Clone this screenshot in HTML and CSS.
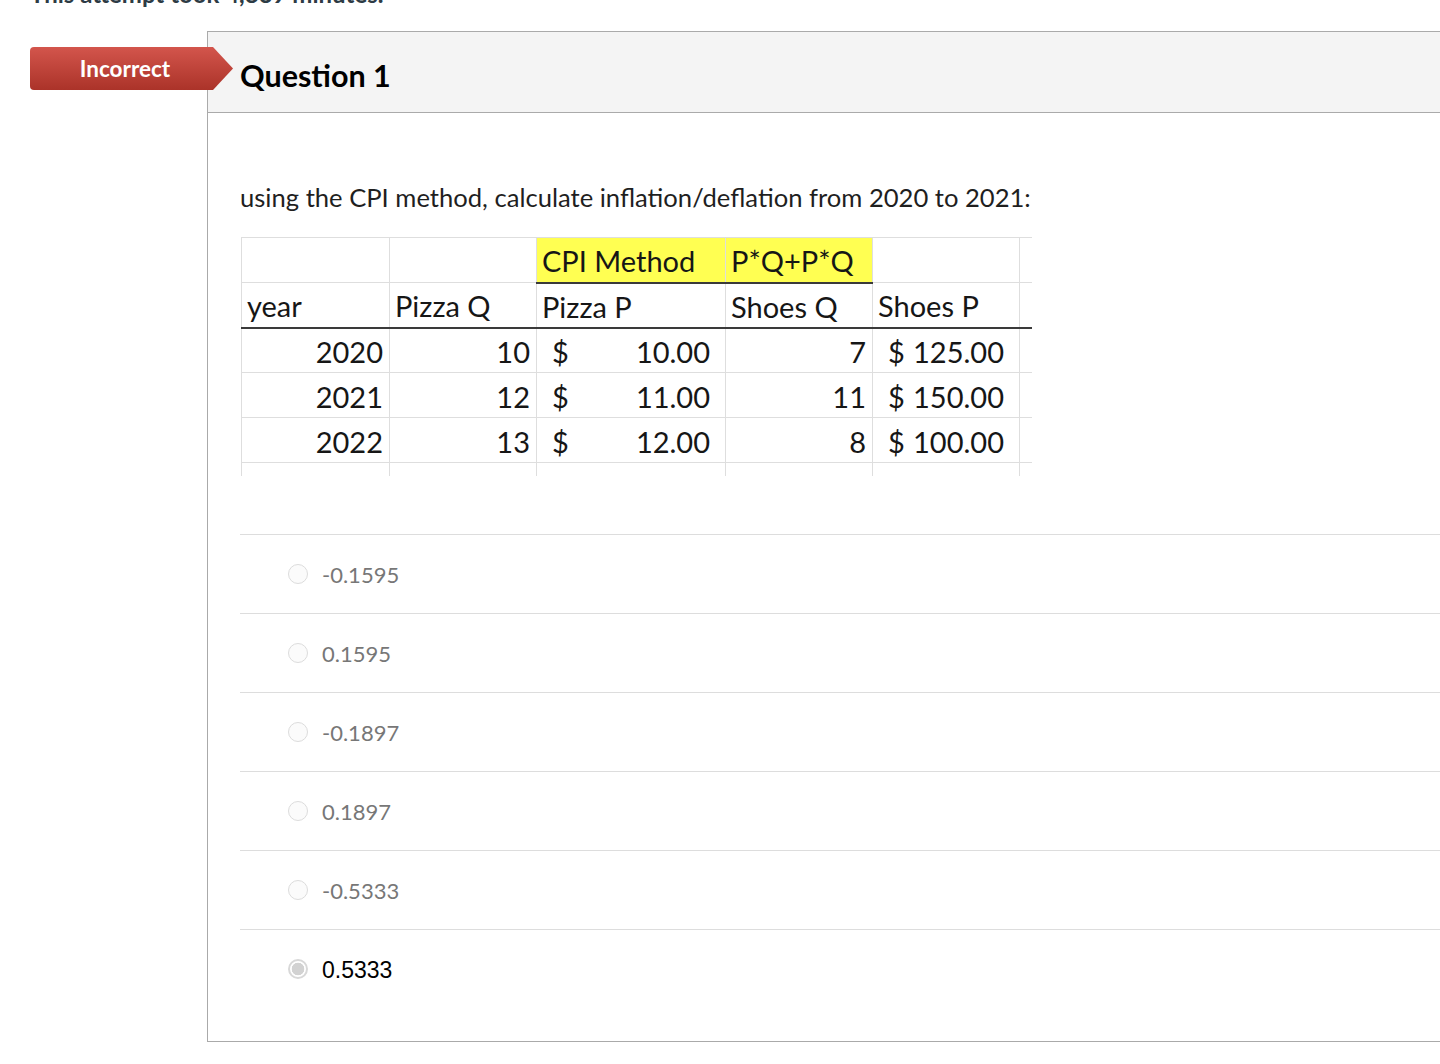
FILE: index.html
```html
<!DOCTYPE html>
<html lang="en">
<head>
<meta charset="utf-8">
<title>Question 1</title>
<link rel="stylesheet" href="styles.css">
</head>
<body>
<div class="page">
  <div class="attempt">This attempt took 4,839 minutes.</div>

  <div class="question">
    <div class="flag">Incorrect</div>
    <div class="q-header">Question 1</div>
    <div class="q-content">
      <p class="q-text">using the CPI method, calculate inflation/deflation from 2020 to 2021:</p>

      <table class="sheet">
        <colgroup>
          <col class="c1"><col class="c2"><col class="c3"><col class="c4"><col class="c5"><col class="c6">
        </colgroup>
        <tr class="r-top">
          <td></td><td></td>
          <td class="hl">CPI Method</td>
          <td class="hl">P*Q+P*Q</td>
          <td></td><td class="last"></td>
        </tr>
        <tr class="r-head">
          <td>year</td><td>Pizza Q</td><td>Pizza P</td><td>Shoes Q</td><td>Shoes P</td><td class="last"></td>
        </tr>
        <tr>
          <td class="num">2020</td><td class="num">10</td>
          <td><div class="acct"><span>$</span><span>10.00</span></div></td>
          <td class="num">7</td>
          <td><div class="acct tight"><span>$</span><span>125.00</span></div></td>
          <td class="last"></td>
        </tr>
        <tr>
          <td class="num">2021</td><td class="num">12</td>
          <td><div class="acct"><span>$</span><span>11.00</span></div></td>
          <td class="num">11</td>
          <td><div class="acct tight"><span>$</span><span>150.00</span></div></td>
          <td class="last"></td>
        </tr>
        <tr>
          <td class="num">2022</td><td class="num">13</td>
          <td><div class="acct"><span>$</span><span>12.00</span></div></td>
          <td class="num">8</td>
          <td><div class="acct tight"><span>$</span><span>100.00</span></div></td>
          <td class="last"></td>
        </tr>
        <tr class="r-stub">
          <td></td><td></td><td></td><td></td><td></td><td class="last"></td>
        </tr>
      </table>

      <div class="answers">
        <div class="answer"><span class="radio"></span><span class="a-text">-0.1595</span></div>
        <div class="answer"><span class="radio"></span><span class="a-text">0.1595</span></div>
        <div class="answer"><span class="radio"></span><span class="a-text">-0.1897</span></div>
        <div class="answer"><span class="radio"></span><span class="a-text">0.1897</span></div>
        <div class="answer"><span class="radio"></span><span class="a-text">-0.5333</span></div>
        <div class="answer selected"><span class="radio checked"></span><span class="a-text">0.5333</span></div>
      </div>
    </div>
  </div>
</div>
</body>
</html>
```

FILE: styles.css
```css
* { box-sizing: border-box; }

html, body {
  margin: 0;
  padding: 0;
  background: #ffffff;
  overflow: hidden;
}

body {
  font-family: Lato, "Liberation Sans", sans-serif;
  color: #1c1c1c;
}

.page {
  width: 1440px;
  height: 1064px;
  overflow: hidden;
}

.attempt {
  margin-top: -18px;
  padding-left: 30px;
  font-size: 24px;
  line-height: 24px;
  height: 24px;
  color: #2d3b45;
  font-weight: 700;
}

.question {
  position: relative;
  margin-top: 25px;
  margin-left: 207px;
  margin-right: -10px;
  border-top: 1px solid #aaaaaa;
  border-left: 1px solid #aaaaaa;
  border-bottom: 1px solid #aaaaaa;
}

.flag {
  position: absolute;
  left: -178px;
  top: 15px;
  width: 203px;
  height: 43px;
  padding-right: 13px;
  display: flex;
  align-items: center;
  justify-content: center;
  font-size: 22.5px;
  font-weight: 700;
  color: #ffffff;
  border-radius: 4px 0 0 4px;
  background: linear-gradient(#d3554c, #ab3329);
  clip-path: polygon(0 0, calc(100% - 20px) 0, 100% 50%, calc(100% - 20px) 100%, 0 100%);
}

.q-header {
  height: 81px;
  padding: 5px 32px 0;
  display: flex;
  align-items: center;
  background: #f4f4f4;
  border-bottom: 1px solid #aaaaaa;
  font-size: 30.5px;
  font-weight: 700;
  color: #000000;
}

.q-content {
  padding: 66px 0 33px 32px;
}

.q-text {
  margin: 0;
  font-size: 25.6px;
  line-height: 36px;
  color: #1f1f1f;
}

.sheet {
  margin: 22px 0 0 1px;
  border-collapse: collapse;
  table-layout: fixed;
  width: 790px;
  font-family: Lato, "Liberation Sans", sans-serif;
  font-size: 29px;
  color: #161616;
}

.sheet col.c1 { width: 148px; }
.sheet col.c2 { width: 147px; }
.sheet col.c3 { width: 189px; }
.sheet col.c4 { width: 147px; }
.sheet col.c5 { width: 147px; }
.sheet col.c6 { width: 12px; }

.sheet td {
  border: 1px solid #dedede;
  padding: 3px 6px 0 5px;
  height: 45px;
  white-space: nowrap;
  overflow: visible;
  line-height: 40px;
}

.sheet td.last { border-right: none; }

.sheet tr.r-head td {
  height: 44px;
  border-bottom: 2px solid #3a3a3a;
}

.sheet tr.r-top td.hl {
  background: #ffff52;
  border-bottom: 2px solid #3a3a3a;
}

.sheet tr.r-stub td {
  height: 13px;
  border-bottom: none;
}

.sheet td.num { text-align: right; }

.acct {
  display: flex;
  justify-content: space-between;
  padding: 0 9px 0 10px;
}

.acct.tight { padding: 0 9px 0 10px; }

.answers {
  margin-top: 58px;
}

.answer {
  height: 79px;
  border-top: 1px solid #dddddd;
  display: flex;
  align-items: center;
  padding-left: 48px;
  gap: 14px;
}

.radio {
  width: 20px;
  height: 20px;
  border-radius: 50%;
  border: 1px solid #dcdcdc;
  background: #fbfbfb;
  flex: none;
}

.radio.checked {
  border: 2px solid #d8d8d8;
  background: radial-gradient(circle, #d2d2d2 0 6px, #ffffff 6.6px);
}

.a-text {
  font-size: 22px;
  color: #777777;
  padding-top: 1px;
}

.answer.selected .a-text {
  font-family: "Liberation Sans", Arial, sans-serif;
  font-size: 23px;
  color: #000000;
  padding-top: 4px;
}
```
